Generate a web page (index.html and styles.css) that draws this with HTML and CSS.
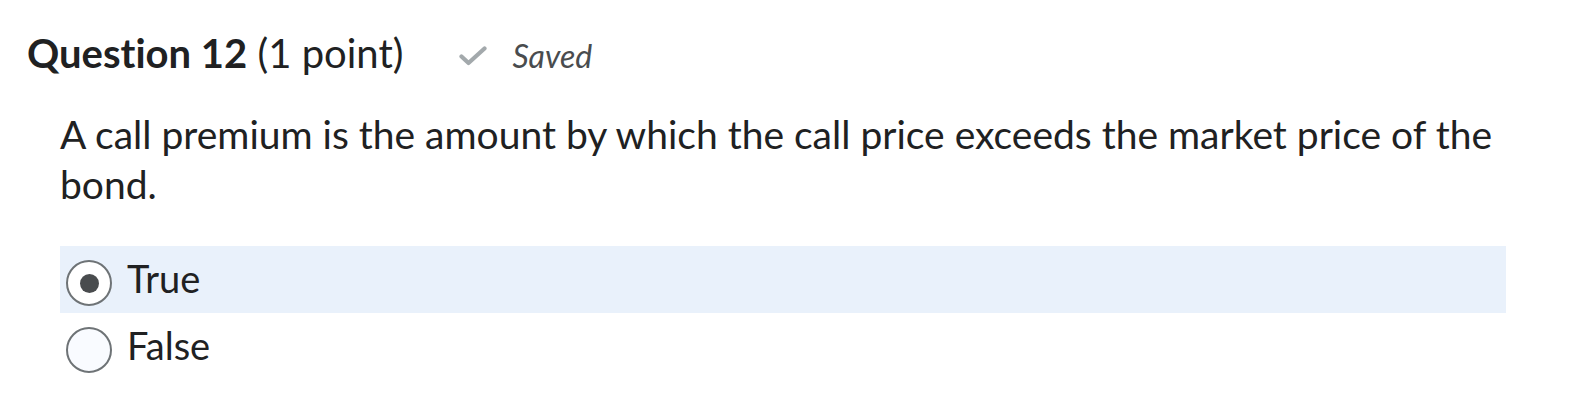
FILE: index.html
```html
<!DOCTYPE html>
<html lang="en">
<head>
<meta charset="utf-8">
<title>Question 12</title>
<link rel="stylesheet" href="styles.css">
</head>
<body>
<div class="question">
  <div class="q-header">
    <h2 class="q-title"><span class="q-num">Question 12</span> <span class="q-points">(1 point)</span></h2>
    <div class="q-status">
      <svg class="check" width="28" height="20" viewBox="0 0 28 20" aria-hidden="true">
        <path d="M2.5 10.5 L9.5 17 L25.5 2.5" fill="none" stroke="#a3a9ac" stroke-width="4.2" stroke-linecap="round" stroke-linejoin="round"/>
      </svg>
      <span class="saved">Saved</span>
    </div>
  </div>
  <p class="q-text">A call premium is the amount by which the call price exceeds the market price of the bond.</p>
  <div class="options">
    <label class="option selected">
      <span class="radio checked"><span class="dot"></span></span>
      <span class="opt-label">True</span>
    </label>
    <label class="option">
      <span class="radio"></span>
      <span class="opt-label">False</span>
    </label>
  </div>
</div>
</body>
</html>
```

FILE: styles.css
```css
html, body {
  margin: 0;
  padding: 0;
  background: #ffffff;
}
body {
  font-family: Lato, "Noto Sans", "Liberation Sans", sans-serif;
  color: #202122;
  font-variant-ligatures: none;
}
.question {
  width: 1592px;
  padding-top: 30px;
}
.q-header {
  display: flex;
  align-items: baseline;
  padding-left: 27px;
  height: 46px;
}
.q-title {
  margin: 0;
  font-size: 40px;
  line-height: 46px;
  font-weight: 400;
  color: #202122;
  white-space: nowrap;
}
.q-num {
  font-weight: 700;
}
.q-status {
  display: flex;
  align-items: baseline;
  margin-left: 56px;
  color: #494c4e;
}
.check {
  align-self: center;
  margin-right: 25px;
}
.saved {
  font-style: italic;
  font-size: 32px;
  line-height: 46px;
}
.q-text {
  margin: 33px 0 0 0;
  padding-left: 60px;
  width: 1460px;
  font-size: 39px;
  line-height: 50px;
}
.options {
  margin-top: 37px;
  margin-left: 60px;
  width: 1446px;
  display: flex;
  flex-direction: column;
}
.option {
  display: flex;
  align-items: flex-start;
  height: 67px;
  box-sizing: border-box;
  padding: 10px 0 0 6px;
}
.option.selected {
  background: #e9f1fb;
}
.radio {
  margin-top: 4px;
  width: 46px;
  height: 46px;
  box-sizing: border-box;
  border: 2px solid #6e7376;
  border-radius: 50%;
  background: #f9fbff;
  display: flex;
  align-items: center;
  justify-content: center;
  flex: none;
}
.radio.checked {
  background: #ffffff;
}
.dot {
  width: 19px;
  height: 19px;
  border-radius: 50%;
  background: #494c4e;
}
.opt-label {
  margin-left: 15px;
  font-size: 38px;
  line-height: 45px;
}
```
